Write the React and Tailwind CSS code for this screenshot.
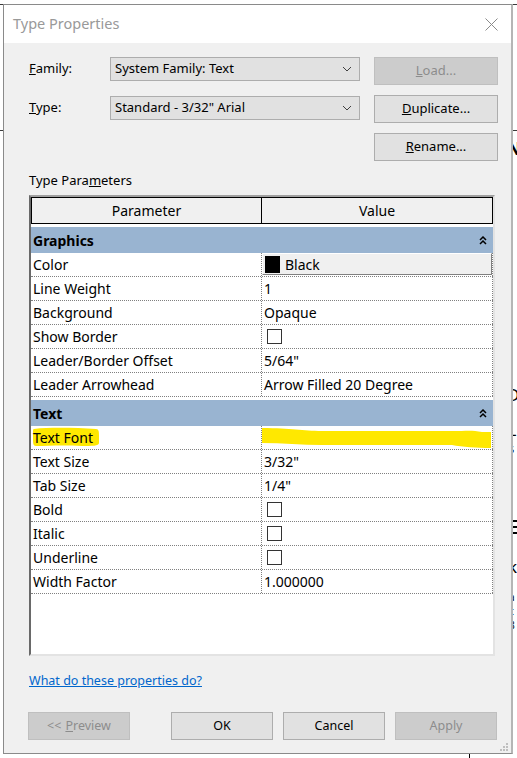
import React from 'react'

const font = { fontFamily: '"Noto Sans", "Open Sans", sans-serif' }

const graphicsRows = [
    { name: 'Color', value: 'color' },
    { name: 'Line Weight', value: '1' },
    { name: 'Background', value: 'Opaque' },
    { name: 'Show Border', value: 'check' },
    { name: 'Leader/Border Offset', value: '5/64"' },
    { name: 'Leader Arrowhead', value: 'Arrow Filled 20 Degree' },
]

const textRows = [
    { name: 'Text Font', value: 'marker' },
    { name: 'Text Size', value: '3/32"' },
    { name: 'Tab Size', value: '1/4"' },
    { name: 'Bold', value: 'check' },
    { name: 'Italic', value: 'check' },
    { name: 'Underline', value: 'check' },
    { name: 'Width Factor', value: '1.000000' },
]

function Chevron() {
    return (
        <svg width="10" height="6" viewBox="0 0 10 6" className="shrink-0">
            <path d="M1 1 L5 5 L9 1" fill="none" stroke="#404040" strokeWidth="1" />
        </svg>
    )
}

function Combo({ text }) {
    return (
        <div className="w-[250px] h-[24px] flex items-center justify-between pl-[4px] pr-[7px] bg-[#e1e1e1] border border-[#adadad] text-[13px] text-black">
            <span>{text}</span>
            <Chevron />
        </div>
    )
}

function Btn({ children, disabled, className = '' }) {
    return (
        <div className={`h-[28px] flex items-center justify-center border ${disabled ? 'bg-[#cccccc] border-[#bfbfbf] text-[#8c8c8c]' : 'bg-[#e1e1e1] border-[#adadad] text-black'} ${className}`}>
            {children}
        </div>
    )
}

function Collapse() {
    return (
        <svg width="8" height="9" viewBox="0 0 8 9">
            <path d="M1 4 L4 1 L7 4 M1 8 L4 5 L7 8" fill="none" stroke="#000" strokeWidth="1.5" />
        </svg>
    )
}

function Section({ title }) {
    return (
        <div className="h-[26px] bg-[#99b4d1] flex items-center justify-between pl-[2px] pr-[6px]">
            <span className="text-[14px] font-bold text-black">{title}</span>
            <Collapse />
        </div>
    )
}

function Checkbox() {
    return <div className="w-[15px] h-[15px] border border-[#333333] bg-white ml-[3px]" />
}

function Row({ name, value }) {
    return (
        <div className="h-[24px] flex border-b border-dotted border-[#808080] text-[14px] text-black">
            <div className="relative w-[231px] flex items-center pl-[2px] border-r border-dotted border-[#808080]">
                {value === 'marker' && (
                    <svg className="absolute left-[1px] top-[0px]" width="68" height="22" viewBox="0 0 68 22">
                        <path d="M2 3 C20 1 45 2 64 3 C67 3 67 6 67 10 L67 17 C67 20 60 20 50 20 C30 19 15 20 4 20 C1 20 1 17 1 12 L1 6 C1 4 1 3 2 3 Z" fill="#ffe800" />
                    </svg>
                )}
                <span className="relative">{name}</span>
            </div>
            <div className="relative flex-1 flex items-center pl-[2px] border-r border-dotted border-[#808080]">
                {value === 'color' && (
                    <div className="absolute inset-0 bottom-[1px] flex items-center gap-[5px] pl-[2px] bg-[#f0f0f0] border border-t-white border-l-white border-r-[#808080] border-b-[#808080]">
                        <div className="w-[15px] h-[17px] bg-black" />
                        <span>Black</span>
                    </div>
                )}
                {value === 'check' && <Checkbox />}
                {value === 'marker' && (
                    <svg className="absolute left-0 top-0" width="231" height="24" viewBox="0 0 231 24">
                        <path d="M0 2 C30 2 40 5 60 5 L190 5 C205 5 210 4 220 6 L229 6 L229 22 C215 22 200 21 190 19 L60 19 C40 19 20 17 0 17 Z" fill="#ffe800" />
                    </svg>
                )}
                {!['color', 'check', 'marker'].includes(value) && <span>{value}</span>}
            </div>
        </div>
    )
}

function Grip() {
    const dots = [[6, 0], [3, 3], [6, 3], [0, 6], [3, 6], [6, 6]]
    return (
        <div className="absolute right-[3px] bottom-[2px] w-[8px] h-[8px]">
            {dots.map(([x, y], i) => (
                <div key={i} className="absolute w-[2px] h-[2px] bg-[#bfbfbf]" style={{ left: x, top: y }} />
            ))}
        </div>
    )
}

export default function App() {
    return (
        <div className="relative w-[517px] h-[758px] bg-white overflow-hidden" style={font}>

            {/* drawing behind the dialog */}
            <div className="absolute left-0 top-[4px] w-full h-[1px] bg-[#3a3a3a]" />
            <div className="absolute left-0 top-[130px] w-full h-[1px] bg-[#3a3a3a]" />
            <div className="absolute left-[469px] top-[740px] w-[1px] h-[20px] bg-black" />
            <div className="absolute left-[507px] top-[140px] text-[17px] font-bold text-black leading-none">N</div>
            <div className="absolute left-[507px] top-[386px] text-[17px] text-black leading-none">D</div>
            <div className="absolute left-[508px] top-[422px] text-[16px] text-black leading-none">L</div>
            <div className="absolute left-[508px] top-[442px] text-[13px] text-black leading-none">s</div>
            <div className="absolute left-[507px] top-[520px] w-[12px] h-[2px] bg-black" />
            <div className="absolute left-[507px] top-[526px] w-[12px] h-[2px] bg-black" />
            <div className="absolute left-[507px] top-[532px] w-[12px] h-[2px] bg-black" />
            <div className="absolute left-[508px] top-[558px] text-[17px] text-black leading-none">k</div>
            <div className="absolute left-[509px] top-[592px] text-[10px] text-black leading-none">a</div>
            <div className="absolute left-[509px] top-[606px] text-[10px] text-black leading-none">c</div>
            <div className="absolute left-[509px] top-[620px] text-[10px] text-black leading-none">8</div>

            {/* dialog */}
            <div className="relative ml-[3px] mt-[4px] w-[510px] h-[750px] bg-[#f0f0f0] border border-[#8a8a8a] border-r-2 border-r-[#b5b5b5] flex flex-col">

                <div className="h-[38px] shrink-0 bg-white flex items-center justify-between pl-[9px] pr-[13px]">
                    <span className="text-[14.5px] text-[#999999]">Type Properties</span>
                    <svg width="13" height="13" viewBox="0 0 13 13">
                        <path d="M0.5 0.5 L12.5 12.5 M12.5 0.5 L0.5 12.5" stroke="#8a8a8a" strokeWidth="1" />
                    </svg>
                </div>

                <div className="flex flex-col pl-[25px] pt-[14px]">

                    <div className="flex items-start gap-[14px]">
                        <div className="flex flex-col gap-[15px]">
                            <div className="flex items-center text-[13px] text-black">
                                <span className="w-[81px]"><u>F</u>amily:</span>
                                <Combo text="System Family: Text" />
                            </div>
                            <div className="flex items-center text-[13px] text-black">
                                <span className="w-[81px]"><u>T</u>ype:</span>
                                <Combo text={'Standard - 3/32" Arial'} />
                            </div>
                        </div>
                        <div className="flex flex-col gap-[10px] w-[124px] text-[13px]">
                            <Btn disabled><u>L</u>oad...</Btn>
                            <Btn><u>D</u>uplicate...</Btn>
                            <Btn><u>R</u>ename...</Btn>
                        </div>
                    </div>

                    <div className="mt-[9px] text-[13px] text-black leading-[20px]">Type Para<u>m</u>eters</div>

                    <div className="mt-[5px] w-[466px] h-[461px] bg-white border-2 border-t-[#a0a0a0] border-l-[#696969] border-r-[#e3e3e3] border-b-[#e3e3e3] flex flex-col">
                        <div className="h-[27px] shrink-0 flex bg-[#f0f0f0] border border-black text-[14px] text-black">
                            <div className="w-[230px] flex items-center justify-center border-r border-black">Parameter</div>
                            <div className="flex-1 flex items-center justify-center">Value</div>
                        </div>
                        <div className="h-[3px] shrink-0" />
                        <Section title="Graphics" />
                        {graphicsRows.map((r) => <Row key={r.name} {...r} />)}
                        <div className="h-[3px] shrink-0" />
                        <Section title="Text" />
                        {textRows.map((r) => <Row key={r.name} {...r} />)}
                    </div>

                    <div className="mt-[15px] text-[12.5px] leading-[20px]">
                        <span className="text-[#0066cc] underline">What do these properties do?</span>
                    </div>

                    <div className="mt-[21px] flex -ml-[1px] text-[12.5px]">
                        <Btn disabled className="w-[102px]">&lt;&lt; <u className="ml-[4px]">P</u>review</Btn>
                        <div className="ml-[41px] flex gap-[10px]">
                            <Btn className="w-[102px]">OK</Btn>
                            <Btn className="w-[102px]">Cancel</Btn>
                            <Btn disabled className="w-[102px]">Apply</Btn>
                        </div>
                    </div>
                </div>

                <Grip />
            </div>
        </div>
    )
}
